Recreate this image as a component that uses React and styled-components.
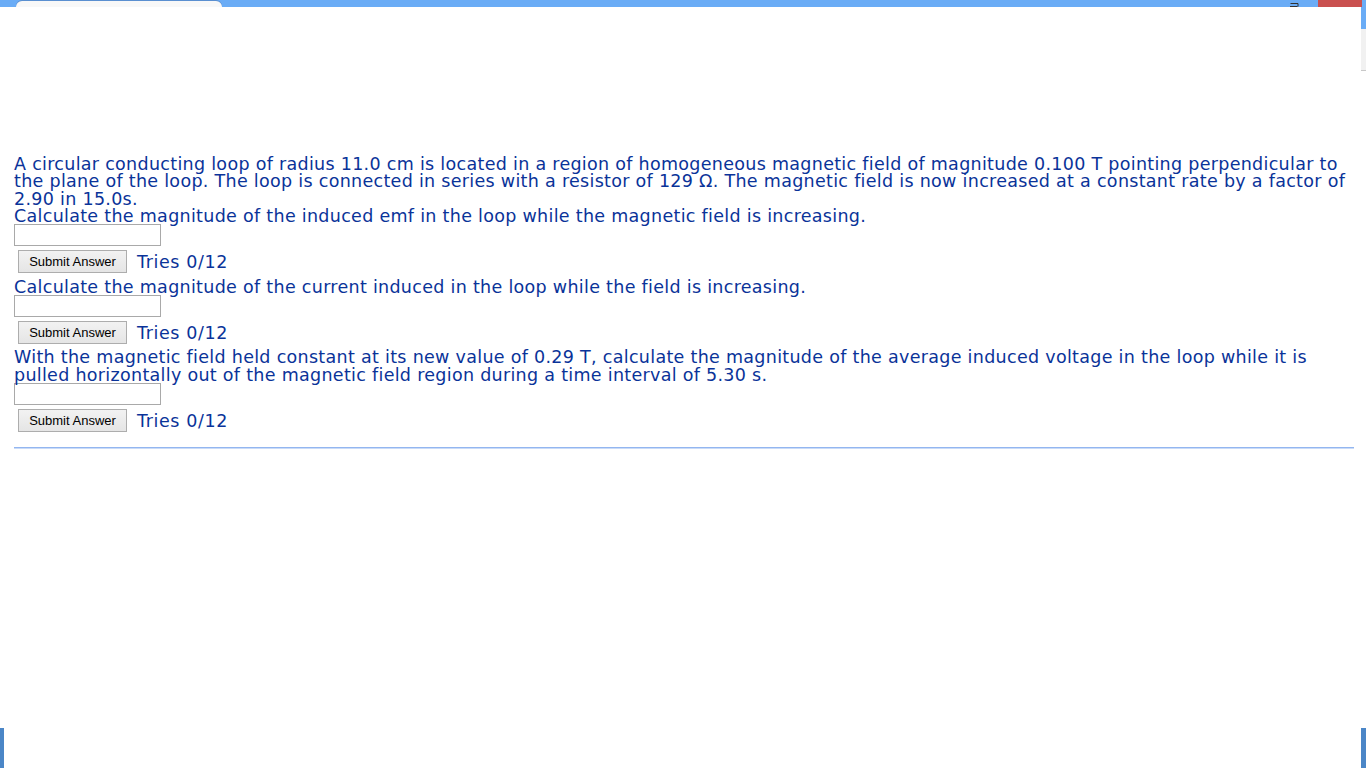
import React from "react"
import styled, { createGlobalStyle } from "styled-components"

const GlobalStyle = createGlobalStyle`
  html, body {
    margin: 0;
    padding: 0;
    background: #ffffff;
  }
  body {
    font-family: "DejaVu Sans", Verdana, sans-serif;
  }
`

const Window = styled.div`
  width: 1366px;
  height: 768px;
  display: flex;
  flex-direction: column;
  overflow: hidden;
  background: #ffffff;
`

const TopBar = styled.div`
  height: 7px;
  flex: none;
  display: flex;
  align-items: flex-end;
  background: #6aacf6;
`

const Tab = styled.div`
  margin-left: 16px;
  width: 206px;
  height: 6px;
  background: #f8f8f8;
  border-radius: 9px 9px 0 0;
  box-shadow: 0 -1px 0 #5a8fd0;
`

const Spacer = styled.div`
  flex: 1;
`

const Restore = styled.div`
  width: 20px;
  height: 7px;
  display: flex;
  align-items: flex-end;
  margin-right: 10px;
`

const CloseBtn = styled.div`
  width: 44px;
  height: 7px;
  margin-right: 4px;
  background: #c9504f;
`

const Body = styled.div`
  flex: 1;
  display: flex;
  min-height: 0;
`

const Rail = styled.div`
  flex: none;
  width: ${p => p.$w}px;
  display: flex;
  flex-direction: column;
`

const RailPart = styled.div`
  height: ${p => (p.$h ? `${p.$h}px` : "auto")};
  flex: ${p => (p.$h ? "none" : "1")};
  background: ${p => p.$bg};
  border-bottom: ${p => (p.$line ? `1px solid ${p.$line}` : "none")};
`

const Page = styled.div`
  flex: 1;
  padding: 147px 7px 0 10px;
  color: #0a3399;
  font-family: "DejaVu Sans", Verdana, sans-serif;
  font-size: 17.5px;
  line-height: 17.5px;
  letter-spacing: 0.3px;
`

const Text = styled.div`
  padding-top: 1.5px;
  margin-bottom: -1.5px;
`

const AnswerBox = styled.input`
  display: block;
  box-sizing: border-box;
  width: 147px;
  height: 22px;
  margin: 0;
  padding: 1px 3px;
  border: 1px solid #a9a9a9;
  background: #fff;
  font-size: 14px;
  outline: none;
`

const SubmitRow = styled.div`
  display: flex;
  align-items: center;
  gap: 10px;
  margin: 4px 0 4px 4px;
  height: 23px;
`

const SubmitButton = styled.button`
  box-sizing: border-box;
  width: 109px;
  height: 23px;
  padding: 0;
  border: 1px solid #adadad;
  border-radius: 0;
  background: linear-gradient(#f2f2f2, #e5e5e5);
  color: #000;
  font-family: "Liberation Sans", Arial, sans-serif;
  font-size: 13px;
  letter-spacing: 0;
  cursor: pointer;
`

const Tries = styled.span`
  white-space: nowrap;
  padding-top: 3px;
  letter-spacing: 0.6px;
`

const Rule = styled.hr`
  margin: 15px 0 0;
  height: 0;
  border: none;
  border-top: 1px solid #93b6f0;
  border-bottom: 1px solid #c9dbf8;
`

const questions = [
  {
    id: 1,
    text: (
      <>
        <Text>
          A circular conducting loop of radius 11.0 cm is located in a region of homogeneous magnetic
          field of magnitude 0.100 T pointing perpendicular to the plane of the loop. The loop is
          connected in series with a resistor of 129 Ω. The magnetic field is now increased at a
          constant rate by a factor of 2.90 in 15.0s.
        </Text>
        <Text>
          Calculate the magnitude of the induced emf in the loop while the magnetic field is
          increasing.
        </Text>
      </>
    )
  },
  {
    id: 2,
    text: (
      <Text>
        Calculate the magnitude of the current induced in the loop while the field is increasing.
      </Text>
    )
  },
  {
    id: 3,
    text: (
      <Text>
        With the magnetic field held constant at its new value of 0.29 T, calculate the magnitude of
        the average induced voltage in the loop while it is pulled horizontally out of the magnetic
        field region during a time interval of 5.30 s.
      </Text>
    )
  }
]

const Question = ({ q }) => (
  <div>
    {q.text}
    <AnswerBox type="text" />
    <SubmitRow>
      <SubmitButton>Submit Answer</SubmitButton>
      <Tries>Tries 0/12</Tries>
    </SubmitRow>
  </div>
)

export default function App() {
  return (
    <>
      <GlobalStyle />
      <Window>
        <TopBar>
          <Tab />
          <Spacer />
          <Restore>
            <svg width="11" height="5" viewBox="0 0 11 5">
              <path d="M2 4.5 H9.5 M2.5 1.5 H10 V4.5" stroke="#333" strokeWidth="1" fill="none" />
            </svg>
          </Restore>
          <CloseBtn />
        </TopBar>
        <Body>
          <Rail $w={4}>
            <RailPart $bg="#ffffff" />
            <RailPart $h={40} $bg="#4b86c7" />
          </Rail>
          <Page>
            {questions.map(q => (
              <Question key={q.id} q={q} />
            ))}
            <Rule />
          </Page>
          <Rail $w={5}>
            <RailPart $h={22} $bg="#6aacf6" />
            <RailPart $h={41} $bg="#f1f1f1" $line="#c8c8c8" />
            <RailPart $bg="#ffffff" />
            <RailPart $h={40} $bg="#4b86c7" />
          </Rail>
        </Body>
      </Window>
    </>
  )
}
